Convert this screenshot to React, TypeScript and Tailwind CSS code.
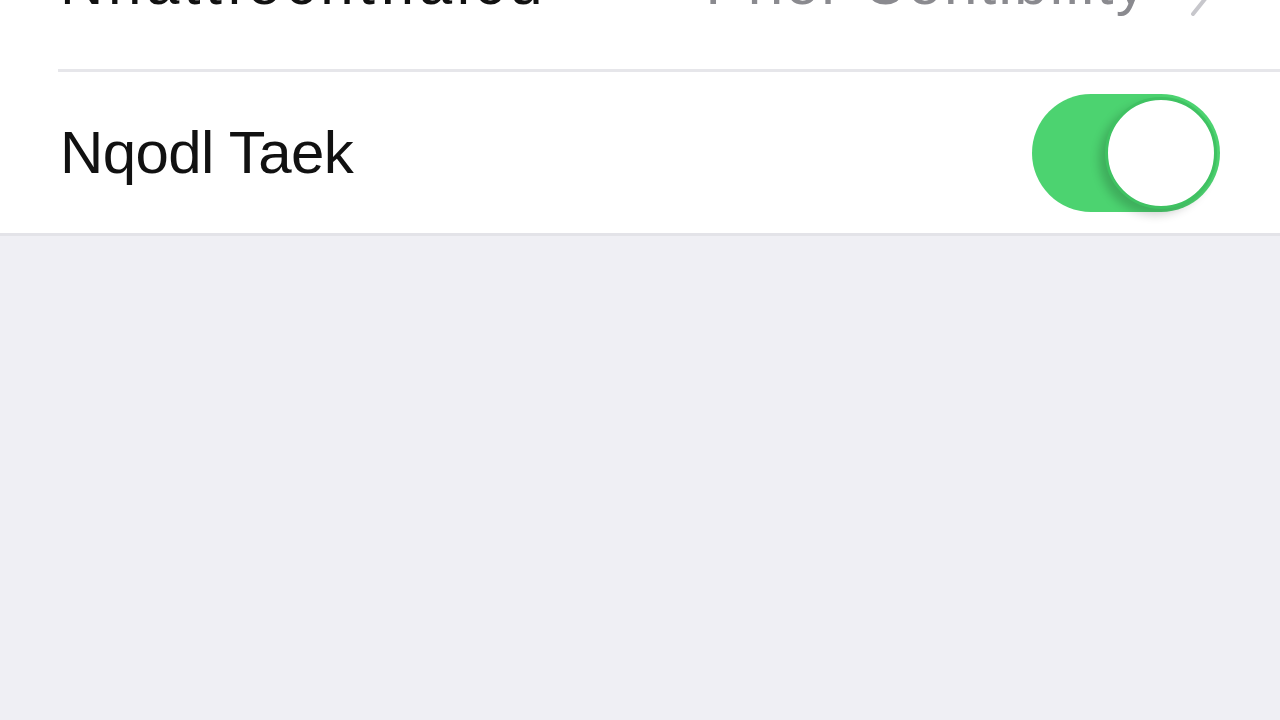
export default function App() {
  return (
    <div
      className="w-[1280px] h-[720px] overflow-hidden bg-[#efeff4]"
      style={{ fontFamily: '"Liberation Sans", Arial, sans-serif' }}
    >
      {/* settings group, first row scrolled partly out of view */}
      <div className="-mt-[92px] bg-white border-b-[3px] border-[#e3e3e8]">
        <div className="h-[161px] flex items-center pl-[60px] pr-[64px] pb-[10px]">
          <span className="text-[60px] leading-none text-[#111] tracking-[4.6px] whitespace-nowrap">
            Nhattfocnt.lalcu
          </span>
          <span className="ml-auto text-[60px] leading-none text-[#8a8a8f] tracking-[2.3px] whitespace-nowrap">
            Prior Contibility
          </span>
          <svg className="ml-[42px] mt-[10px]" width="26" height="56" viewBox="0 0 26 56" fill="none">
            <path d="M3 3 L23 28 L3 53" stroke="#c7c7cc" strokeWidth="4" strokeLinecap="round" strokeLinejoin="round" />
          </svg>
        </div>
        <div className="ml-[58px] h-[3px] bg-[#e6e6ea]" />
        <div className="h-[161px] flex items-center pl-[60px] pr-[60px]">
          <span className="text-[60px] leading-none text-[#111] tracking-[-0.6px]">Nqodl Taek</span>
          <div className="ml-auto w-[188px] h-[118px] rounded-full bg-[#4cd370] flex items-center justify-end p-[3px]">
            <div className="w-[112px] h-[112px] rounded-full bg-white border-[3px] border-[#3fc262] shadow-[-6px_6px_10px_rgba(0,0,0,0.18)]" />
          </div>
        </div>
      </div>
    </div>
  );
}
